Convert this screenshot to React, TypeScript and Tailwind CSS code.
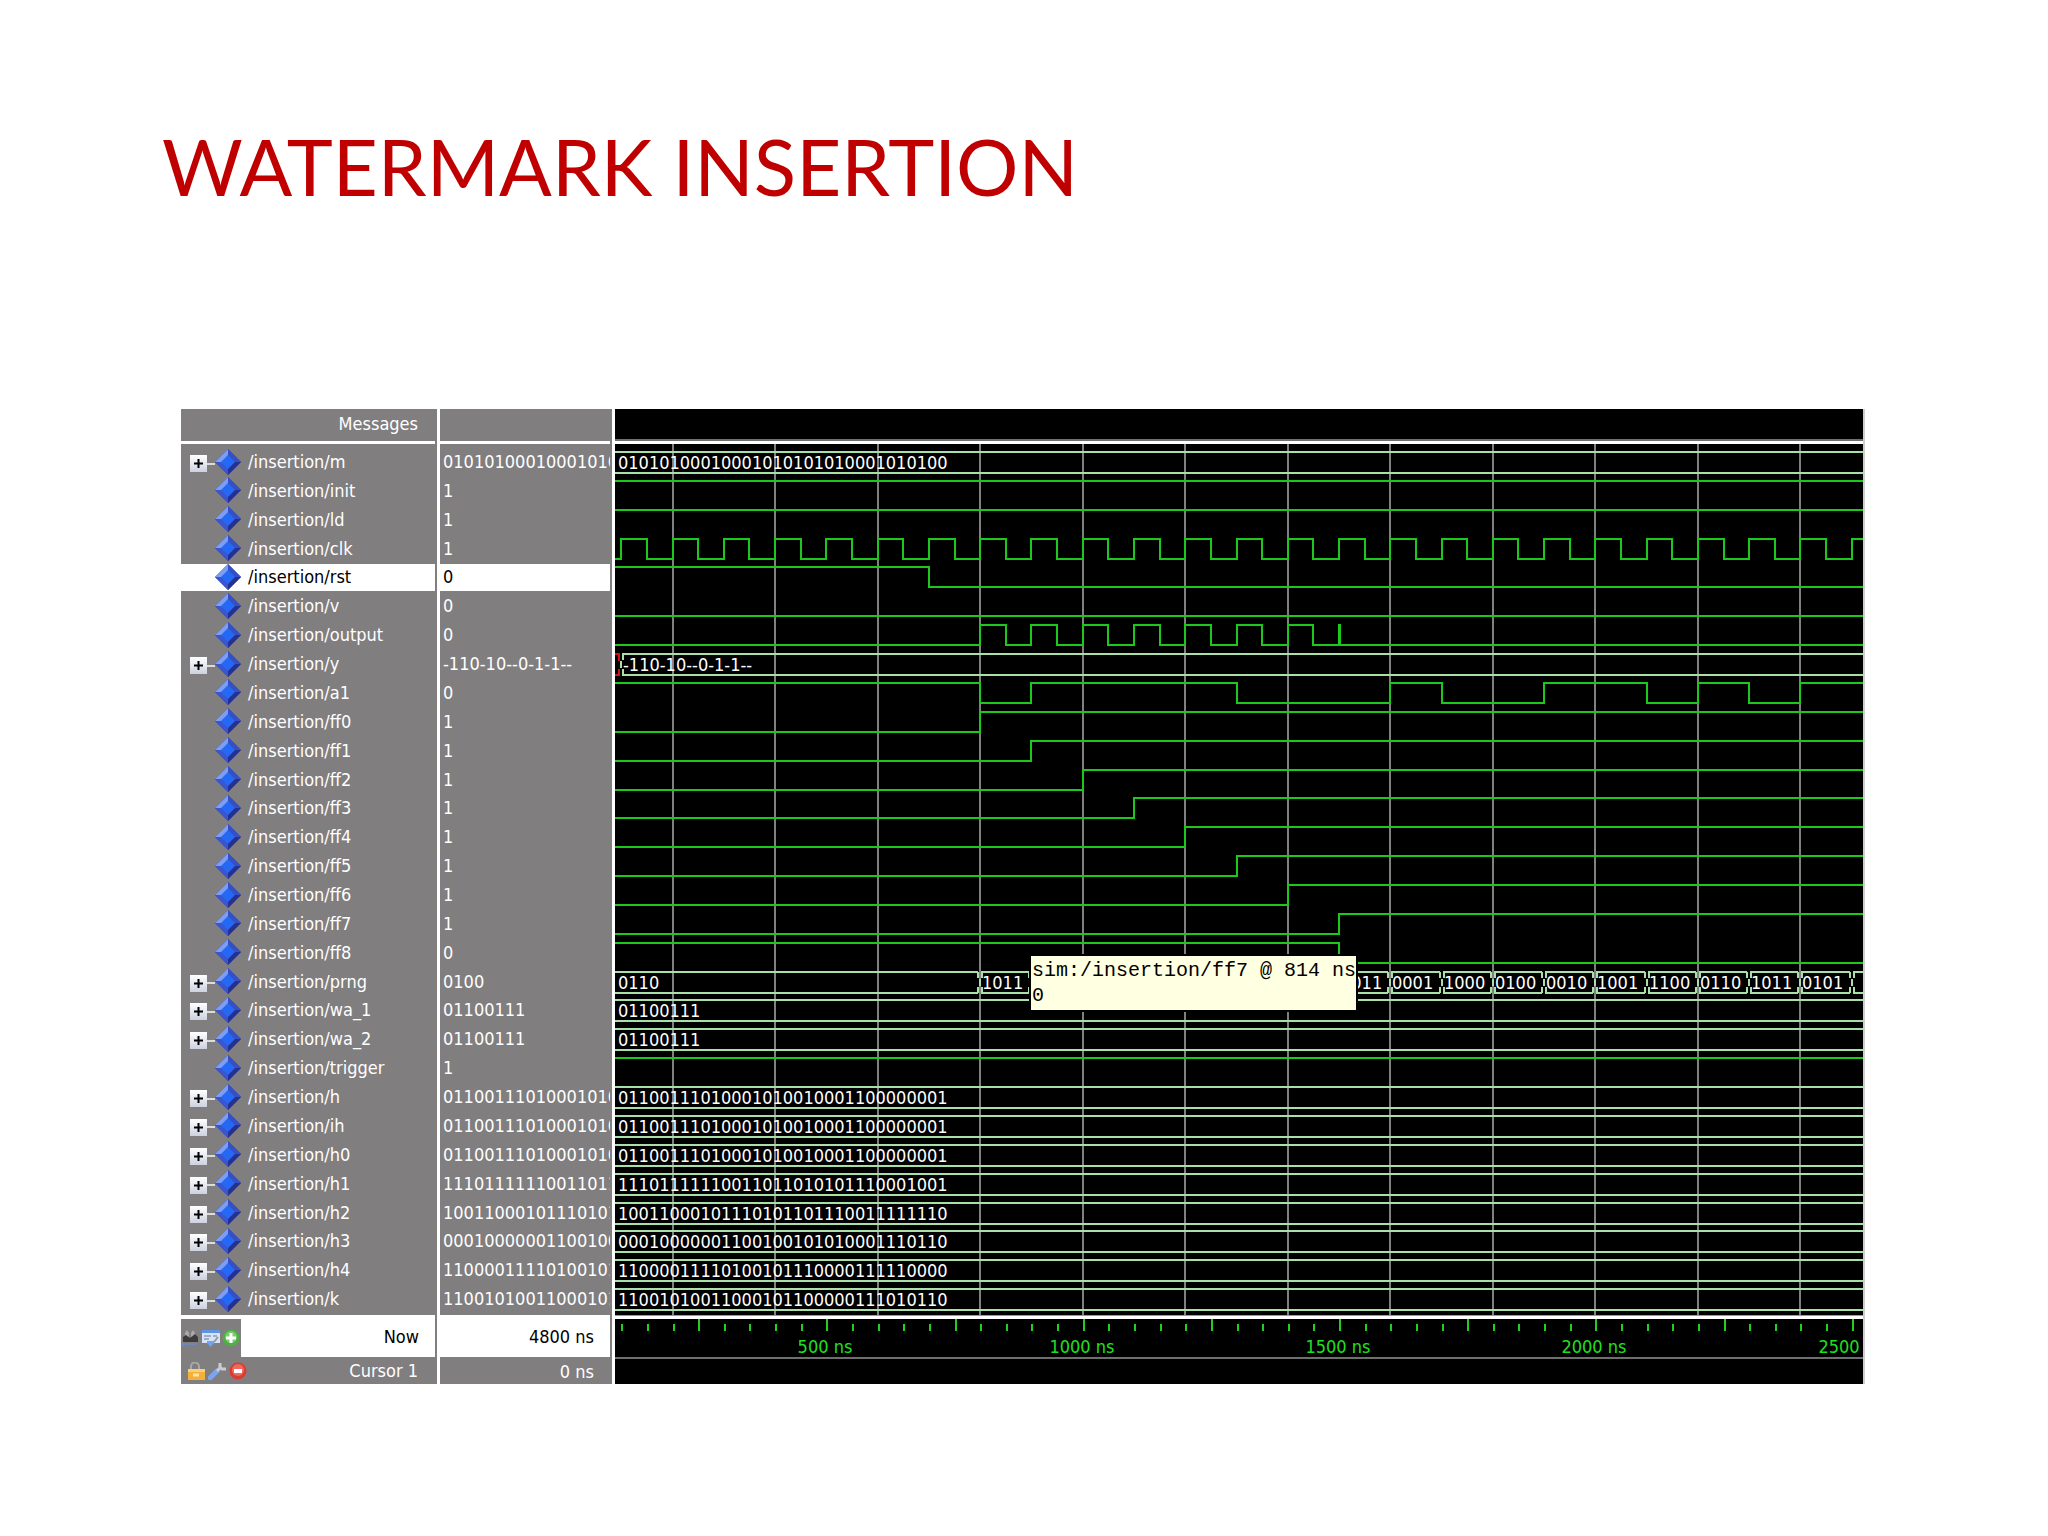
import { useState } from "react";

interface Signal {
    name: string;
    value: string;
    // 1-bit signals: start level and the times (ns) at which it toggles
    start?: 0 | 1;
    edges?: number[];
    // vectors: list of [start time, label]
    bus?: [number, string][];
}

const range = (from: number, to: number, step: number) => {
    const out: number[] = [];
    for (let t = from; t <= to; t += step) out.push(t);
    return out;
};

const flat = (bits: string): [number, string][] => [[0, bits]];

const H = "01100111010001010010001100000001";

const SIGNALS: Signal[] = [
    { name: "m", value: "01010100010001010101010001010100", bus: flat("01010100010001010101010001010100") },
    { name: "init", value: "1", start: 1 },
    { name: "ld", value: "1", start: 1 },
    { name: "clk", value: "1", start: 0, edges: range(100, 3500, 50) },
    { name: "rst", value: "0", start: 1, edges: [700] },
    { name: "v", value: "0", start: 0 },
    { name: "output", value: "0", start: 0, edges: [...range(800, 1450, 50), 1500, 1501] },
    { name: "y", value: "-110-10--0-1-1--", bus: [[100, "-110-10--0-1-1--"]] },
    { name: "a1", value: "0", start: 1, edges: [800, 900, 1300, 1600, 1700, 1900, 2100, 2200, 2300, 2400] },
    { name: "ff0", value: "1", start: 0, edges: [800] },
    { name: "ff1", value: "1", start: 0, edges: [900] },
    { name: "ff2", value: "1", start: 0, edges: [1000] },
    { name: "ff3", value: "1", start: 0, edges: [1100] },
    { name: "ff4", value: "1", start: 0, edges: [1200] },
    { name: "ff5", value: "1", start: 0, edges: [1300] },
    { name: "ff6", value: "1", start: 0, edges: [1400] },
    { name: "ff7", value: "1", start: 0, edges: [1500] },
    { name: "ff8", value: "0", start: 1, edges: [1500] },
    {
        name: "prng",
        value: "0100",
        bus: [
            [0, "0110"], [800, "1011"], [900, ""], [1500, "0011"], [1600, "0001"], [1700, "1000"],
            [1800, "0100"], [1900, "0010"], [2000, "1001"], [2100, "1100"], [2200, "0110"],
            [2300, "1011"], [2400, "0101"], [2500, ""],
        ],
    },
    { name: "wa_1", value: "01100111", bus: flat("01100111") },
    { name: "wa_2", value: "01100111", bus: flat("01100111") },
    { name: "trigger", value: "1", start: 1 },
    { name: "h", value: H, bus: flat(H) },
    { name: "ih", value: H, bus: flat(H) },
    { name: "h0", value: H, bus: flat(H) },
    { name: "h1", value: "11101111110011011010101110001001", bus: flat("11101111110011011010101110001001") },
    { name: "h2", value: "10011000101110101101110011111110", bus: flat("10011000101110101101110011111110") },
    { name: "h3", value: "00010000001100100101010001110110", bus: flat("00010000001100100101010001110110") },
    { name: "h4", value: "11000011110100101110000111110000", bus: flat("11000011110100101110000111110000") },
    { name: "k", value: "11001010011000101100000111010110", bus: flat("11001010011000101100000111010110") },
];

// the view is scrolled a little, so t = 0 sits left of the pane
const toX = (ns: number) => Math.round(ns * 0.5127 - 45);
const rowTop = (i: number) => 5 + (i * 866) / 30;
const hiY = (i: number) => Math.round(rowTop(i) + 3);
const loY = (i: number) => Math.round(rowTop(i) + 23);
const END = 4000;

function wavePath(s: Signal, i: number) {
    let level = s.start;
    const y = () => (level ? hiY(i) : loY(i));
    let d = `M0 ${y()}`;
    for (const t of s.edges ?? []) {
        d += `H${toX(t)}`;
        level = level ? 0 : 1;
        d += `V${y()}`;
    }
    return d + `H${END}`;
}

function Bus({ segments, row }: { segments: [number, string][]; row: number }) {
    const top = hiY(row);
    const bottom = loY(row) + 1;
    return (
        <g>
            {segments.map(([t, label], n) => {
                const first = t === 0;
                const x1 = first ? 0 : toX(t) + 1;
                const x2 = n + 1 < segments.length ? toX(segments[n + 1][0]) - 2 : END;
                const open = first ? `M0 ${top}` : `M${x1 - 1} ${bottom - 7}V${top + 7}M${x1 + 1} ${top + 6}V${top}`;
                const shut = x2 === END ? "" : `M${x2} ${top}V${top + 6}M${x2} ${bottom}V${bottom - 6}`;
                return (
                    <g key={t}>
                        <path
                            d={`${open}H${x2}M${x1} ${bottom}H${x2}${first ? "" : `M${x1 + 1} ${bottom}v-6`}${shut}`}
                            className="fill-none stroke-[#a9dfa9]"
                            strokeWidth="2"
                        />
                        {label && (
                            <text x={first ? 3 : x1 + 1} y={top + 17} className="fill-white text-[18px]">
                                {label}
                            </text>
                        )}
                    </g>
                );
            })}
            {segments[0][0] > 0 && (
                <path
                    d={`M0 ${top}H4V${top + 7}M0 ${bottom}H4V${bottom - 6}`}
                    className="fill-none stroke-[#d01414]"
                    strokeWidth="2"
                />
            )}
        </g>
    );
}

function Diamond() {
    return (
        <svg viewBox="0 0 26 26" className="size-[26px] shrink-0">
            <path d="M13 0 26 13 13 26 0 13Z" fill="#2a3fae" />
            <path d="M13 0 0 13 7 13 13 7Z" fill="#7d9df2" />
            <path d="M13 0 26 13 19 13 13 7Z" fill="#3550c4" />
            <path d="M0 13 13 26 13 19 7 13Z" fill="#3a55d0" />
            <path d="M26 13 13 26 13 19 19 13Z" fill="#26308f" />
            <path d="M13 6 20 13 13 20 6 13Z" fill="#2468f5" />
        </svg>
    );
}

function ToolButton({ label, children }: { label: string; children: React.ReactNode }) {
    return (
        <button aria-label={label} className="cursor-pointer">
            <svg viewBox="0 0 18 18" className="size-[18px]">
                {children}
            </svg>
        </button>
    );
}

export default function App() {
    const [selected, setSelected] = useState("rst");

    return (
        <main className="min-h-screen bg-white pt-[118px] font-['DejaVu_Sans_Condensed','DejaVu_Sans',sans-serif] text-[18px]">
            <h1 className="pl-[162px] font-[Lato,sans-serif] text-[78px] leading-[96px] text-[#c00000]">
                WATERMARK INSERTION
            </h1>

            <div className="mt-[195px] mr-[183px] ml-[181px] flex gap-[3px] border-r-2 border-[#cfcdcd]">
                {/* signal names */}
                <section className="flex w-[256px] shrink-0 flex-col bg-[#807e7f] text-white">
                    <header className="h-8 pr-[19px] text-right leading-[30px]">Messages</header>
                    <div className="mr-[2px] h-[3px] bg-white" />
                    <ul className="grid h-[871px] auto-rows-fr grid-cols-1 pt-[5px]">
                        {SIGNALS.map((s) => (
                            <li key={s.name}>
                                <div
                                    onClick={() => setSelected(s.name)}
                                    className={`mr-[2px] flex h-[27px] items-center pb-[2px] pl-[9px] whitespace-nowrap ${selected === s.name ? "bg-white text-black" : ""}`}
                                >
                                    {s.bus ? (
                                        <button
                                            aria-label={`Expand ${s.name}`}
                                            className="mt-1 flex size-[17px] items-center justify-center bg-linear-to-b from-white to-[#cdd2e0]"
                                        >
                                            <svg viewBox="0 0 9 9" className="size-[9px]">
                                                <path d="M0 4.5H9M4.5 0V9" className="stroke-black" strokeWidth="2" />
                                            </svg>
                                        </button>
                                    ) : (
                                        <span className="w-[17px]" />
                                    )}
                                    <span className={`mt-1 h-[2px] w-2 ${s.bus ? "bg-[#dcdcdc]" : ""}`} />
                                    <Diamond />
                                    <span className="ml-[7px]">/insertion/{s.name}</span>
                                </div>
                            </li>
                        ))}
                    </ul>
                    <div className="mr-[2px] flex h-[42px] bg-white text-black">
                        <div className="mt-1 flex w-[60px] items-center gap-[2px] bg-[#807e7f] pl-[1px]">
                            <ToolButton label="Find">
                                <path d="M3 4 5 1 7 4V8H3ZM9 4 11 1 13 4V8H9Z" fill="#a9a9a9" />
                                <path d="M1 8 4 6 8 9 13 5 16 8V13H1Z" fill="#3c3c40" />
                                <path d="M0 15H15M2 13 0 15 2 17" fill="none" stroke="#5f8fe8" />
                            </ToolButton>
                            <ToolButton label="Edit cursors">
                                <path d="M0 1H18V14H0Z" fill="#d5e4f8" />
                                <path d="M0 1H18V4H0Z" fill="#5d94e6" />
                                <path d="M2 7H9M11 7H15M2 10H7" stroke="#8d9bb0" strokeWidth="1.5" />
                                <path d="M5 12H12V14L8.500 18 5 14Z" fill="#6fa5f0" />
                                <path d="M12 13 16 8" stroke="#9a9a8a" strokeWidth="2" />
                            </ToolButton>
                            <ToolButton label="Add cursor">
                                <circle cx="9" cy="9" r="8.500" fill="#4fae45" />
                                <circle cx="9" cy="8" r="6" fill="#7ccb70" />
                                <path d="M9 4V14M4 9H14" stroke="#fff" strokeWidth="3" />
                            </ToolButton>
                        </div>
                        <span className="flex-1 pr-4 text-right leading-[44px]">Now</span>
                    </div>
                    <div className="flex h-[27px] items-center gap-[3px] pl-[6px]">
                        <ToolButton label="Lock cursor">
                            <path d="M4 8V5A4 4 0 0 1 12 4V8" fill="none" stroke="#a8a8a8" strokeWidth="2" />
                            <path d="M1 7H18V18H1Z" fill="#f3b13c" />
                            <path d="M1 7H18V10H1Z" fill="#f9cf73" />
                            <path d="M6 13H12" stroke="#fbe3a4" strokeWidth="3" />
                        </ToolButton>
                        <ToolButton label="Cursor properties">
                            <path d="M2 16 9 9" stroke="#7ba4ee" strokeWidth="5" strokeLinecap="round" />
                            <path d="M9 9 13 5M12 1V5L14 7H18" fill="none" stroke="#c9ccd2" strokeWidth="3" />
                        </ToolButton>
                        <ToolButton label="Delete cursor">
                            <circle cx="9" cy="9" r="8.500" fill="#dd3a32" />
                            <circle cx="9" cy="8" r="6" fill="#ee6a60" />
                            <path d="M5 9H13" stroke="#fff" strokeWidth="4" />
                        </ToolButton>
                        <span className="flex-1 pr-[19px] text-right leading-[30px]">Cursor 1</span>
                    </div>
                </section>

                {/* current values */}
                <section className="flex w-[172px] shrink-0 flex-col bg-[#807e7f] text-white">
                    <header className="h-8" />
                    <div className="mr-[2px] h-[3px] bg-white" />
                    <ul className="grid h-[871px] auto-rows-fr grid-cols-1 pt-[5px]">
                        {SIGNALS.map((s) => (
                            <li key={s.name}>
                                <div
                                    className={`mr-[2px] h-[27px] overflow-hidden pl-[3px] leading-[25px] ${selected === s.name ? "bg-white text-black" : ""}`}
                                >
                                    {s.value}
                                </div>
                            </li>
                        ))}
                    </ul>
                    <div className="mr-[2px] h-[42px] bg-white pr-4 text-right leading-[44px] text-black">4800 ns</div>
                    <div className="h-[27px] pr-[18px] text-right leading-[30px]">0 ns</div>
                </section>

                {/* waveforms */}
                <section className="relative flex min-w-0 flex-1 flex-col overflow-hidden bg-black">
                    <div className="h-8 border-b-2 border-[#6f6f6f]" />
                    <div className="h-[3px] bg-white" />
                    <svg className="h-[871px] w-full">
                        {range(200, 4000, 200).map((t) => (
                            <path key={t} d={`M${toX(t)} 0V871`} className="stroke-[#808080]" strokeWidth="2" />
                        ))}
                        {SIGNALS.map((s, i) =>
                            s.bus ? (
                                <Bus key={s.name} segments={s.bus} row={i} />
                            ) : (
                                <path
                                    key={s.name}
                                    d={wavePath(s, i)}
                                    className="fill-none stroke-[#1cc81c]"
                                    strokeWidth="2"
                                />
                            )
                        )}
                    </svg>
                    <div className="h-[4px] border-t border-[#9a9a9a] bg-white" />
                    <svg className="h-[38px] w-full">
                        {range(100, 4000, 50).map((t) => (
                            <path
                                key={t}
                                d={`M${toX(t) + 1} ${t % 250 === 0 ? 0 : 5}V12`}
                                className="stroke-[#1fd01f]"
                                strokeWidth="2"
                            />
                        ))}
                        {range(500, 2500, 500).map((t) => (
                            <text key={t} x={toX(t) - 1} y="34" textAnchor="middle" className="fill-[#1fe01f] text-[18px]">
                                {t} ns
                            </text>
                        ))}
                    </svg>
                    <div className="h-[27px] border-t-2 border-[#6f6f6f]" />

                    <div
                        role="tooltip"
                        className="absolute top-[545px] left-[414px] border-2 border-black bg-[#ffffe1] pl-[1px] font-['Liberation_Mono',monospace] text-[20px] leading-[25px] whitespace-nowrap text-black"
                    >
                        <p className="pt-[2px]">sim:/insertion/ff7 @ 814 ns</p>
                        <p className="pb-[2px]">0</p>
                    </div>
                </section>
            </div>
        </main>
    );
}
